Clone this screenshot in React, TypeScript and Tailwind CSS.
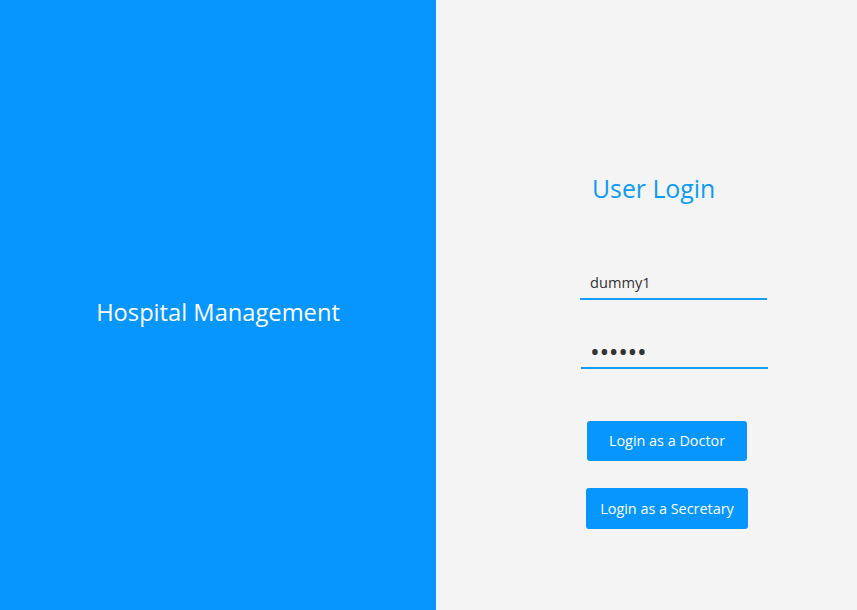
import React from "react";

export default function App() {
  return (
    <div className="flex h-[610px] w-[857px] overflow-hidden" style={{ fontFamily: '"Open Sans", "Noto Sans", sans-serif' }}>
      <div className="flex w-[436px] shrink-0 items-center justify-center bg-[#0796fe] pt-[15px]">
        <h2 className="text-[23.7px] font-normal text-white">Hospital Management</h2>
      </div>
      <div className="flex flex-1 flex-col bg-[#f4f4f4] pl-[144px] pt-[169px]">
        <h1 className="ml-[12px] text-[24.8px] leading-[38px] font-normal text-[#0b9bf9]">User Login</h1>
        <input
          readOnly
          value="dummy1"
          className="mt-[53px] h-[40px] w-[187px] border-b-2 border-[#129efb] bg-transparent pl-[10px] pt-[5px] text-[14.6px] text-[#333333] outline-none"
        />
        <input
          readOnly
          type="password"
          value="dummy1"
          className="ml-px mt-[29px] h-[40px] w-[187px] border-b-2 border-[#129efb] bg-transparent pl-[9px] pt-[6px] text-[26px] tracking-[-0.4px] text-[#333333] outline-none"
        />
        <button className="ml-[7px] mt-[52px] h-[40px] w-[160px] rounded-[3px] bg-[#0796fe] text-[14.4px] text-white">
          Login as a Doctor
        </button>
        <button className="ml-[6px] mt-[27px] h-[41px] w-[162px] rounded-[3px] bg-[#0796fe] text-[14.4px] text-white">
          Login as a Secretary
        </button>
      </div>
    </div>
  );
}
